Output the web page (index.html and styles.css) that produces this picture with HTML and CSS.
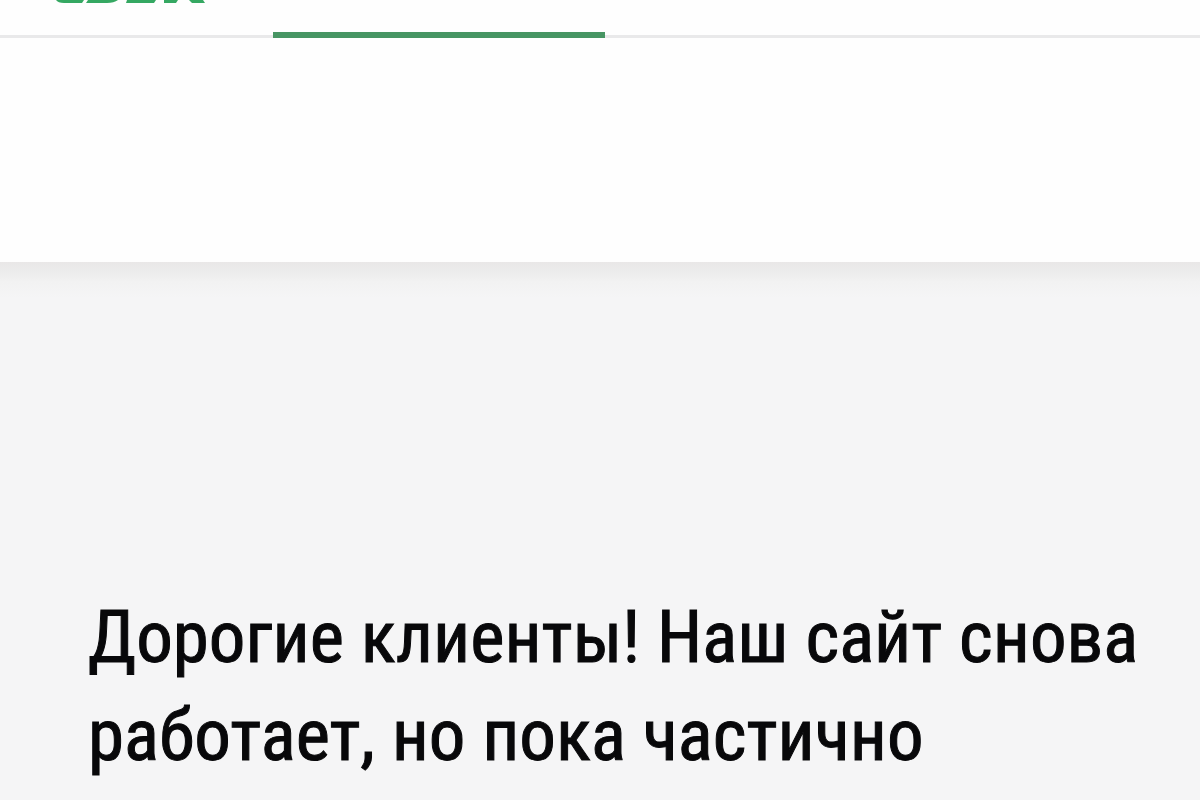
FILE: index.html
```html
<!DOCTYPE html>
<html lang="ru">
<head>
    <meta charset="UTF-8">
    <meta name="viewport" content="width=device-width, initial-scale=1.0">
    <title>CDEK</title>
    <link rel="stylesheet" href="styles.css">
</head>
<body>
    <header class="header">
        <nav class="nav">
            <a class="logo" href="#" aria-label="CDEK">
                <svg width="156" height="8" viewBox="0 0 156 8">
                    <path d="M4 0h28l-2 3H12Q6 3 4 0M36 0h30q-4 3-11 3H34M75 0h29l-2 3H74M112 0h14l-2 3h-12M137 0h14l2 3h-13" fill="#35a862"/>
                </svg>
            </a>
            <span class="tab-line"></span>
        </nav>
    </header>
    <main class="content">
        <h1 class="title">Дорогие клиенты! Наш сайт снова работает, но пока частично</h1>
    </main>
</body>
</html>
```

FILE: styles.css
```css
body {
    margin: 0;
    background-color: #f5f5f6;
    font-family: "Roboto Condensed", Roboto, sans-serif;
    color: #08080a;
}

.header {
    padding-bottom: 224px;
    background-color: #fefefe;
}

.nav {
    display: flex;
    height: 38px;
    box-sizing: border-box;
    border-bottom: 3px solid #e9e9ea;
}

.logo {
    margin-left: 52px;
}

.logo svg {
    display: block;
}

.tab-line {
    width: 332px;
    height: 38px;
    margin-left: 65px;
    box-sizing: border-box;
    border-bottom: 6px solid #479563;
}

.content {
    padding: 326px 48px 0 88px;
    background: linear-gradient(#e9e7e7, #ececec 10px, #f2f2f2 20px, #f5f5f6 36px);
}

.title {
    margin: 0;
    font-size: 73px;
    line-height: 98px;
    font-weight: 400;
    -webkit-text-stroke: 1px #08080a;
}
```
